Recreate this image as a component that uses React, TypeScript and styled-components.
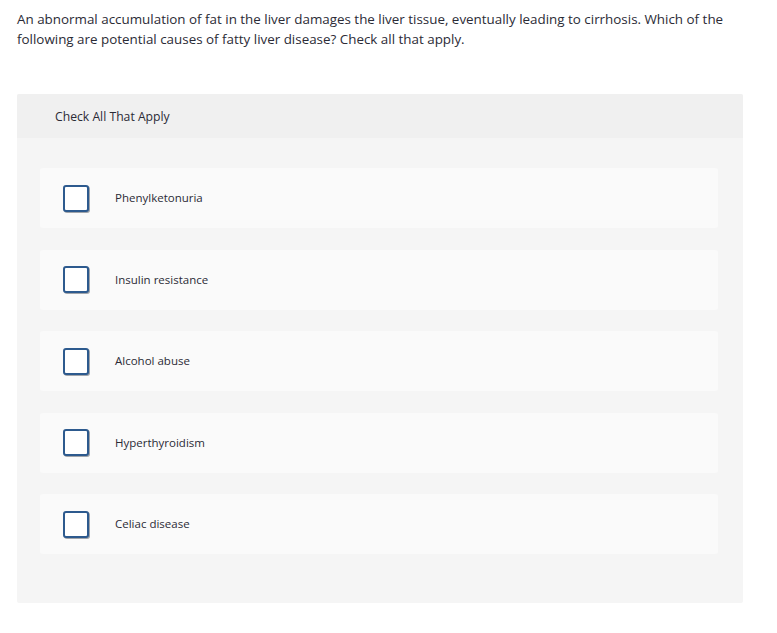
import * as React from 'react';
import styled, { createGlobalStyle } from 'styled-components';

const GlobalStyle = createGlobalStyle`
	body {
		margin: 0;
		background: #ffffff;
		font-family: "Open Sans", "Lato", sans-serif;
		color: #2b2b36;
	}
`;

const Page = styled.div`
	padding: 9px 34px 0 17px;
`;

const Prompt = styled.p`
	margin: 0;
	font-size: 13.4px;
	line-height: 20px;
	color: #2b2b36;
	max-width: 726px;
`;

const Panel = styled.section`
	margin-top: 45px;
	width: 726px;
	background: #f5f5f5;
	border-radius: 2px;
`;

const PanelHeader = styled.div`
	box-sizing: border-box;
	height: 44px;
	display: flex;
	align-items: center;
	padding: 1px 0 0 38px;
	background: #f0f0f0;
	font-size: 12.2px;
	color: #2b2b36;
	border-radius: 2px 2px 0 0;
`;

const ChoiceList = styled.div`
	display: flex;
	flex-direction: column;
	gap: 21.5px;
	padding: 30px 25px 49px 23px;
`;

const Choice = styled.label`
	height: 60px;
	display: flex;
	align-items: center;
	gap: 26px;
	padding-left: 23px;
	background: #fafafa;
	border-radius: 3px;
	cursor: pointer;
`;

const Box = styled.span`
	box-sizing: border-box;
	width: 26px;
	height: 27px;
	background: #ffffff;
	border: 2px solid #2d5a8e;
	border-radius: 3px;
	box-shadow: 1px 1px 0 #a0a4aa;
`;

const ChoiceText = styled.span`
	font-size: 11.5px;
	color: #2b2b36;
	margin-top: -1px;
`;

const choices = [
	'Phenylketonuria',
	'Insulin resistance',
	'Alcohol abuse',
	'Hyperthyroidism',
	'Celiac disease',
];

export default function App() {
	return (
		<Page>
			<GlobalStyle />
			<Prompt>
				An abnormal accumulation of fat in the liver damages the liver tissue, eventually leading to cirrhosis. Which of the following are potential causes of fatty liver disease? Check all that apply.
			</Prompt>
			<Panel>
				<PanelHeader>Check All That Apply</PanelHeader>
				<ChoiceList>
					{choices.map((choice) => (
						<Choice key={choice}>
							<Box />
							<ChoiceText>{choice}</ChoiceText>
						</Choice>
					))}
				</ChoiceList>
			</Panel>
		</Page>
	);
}
